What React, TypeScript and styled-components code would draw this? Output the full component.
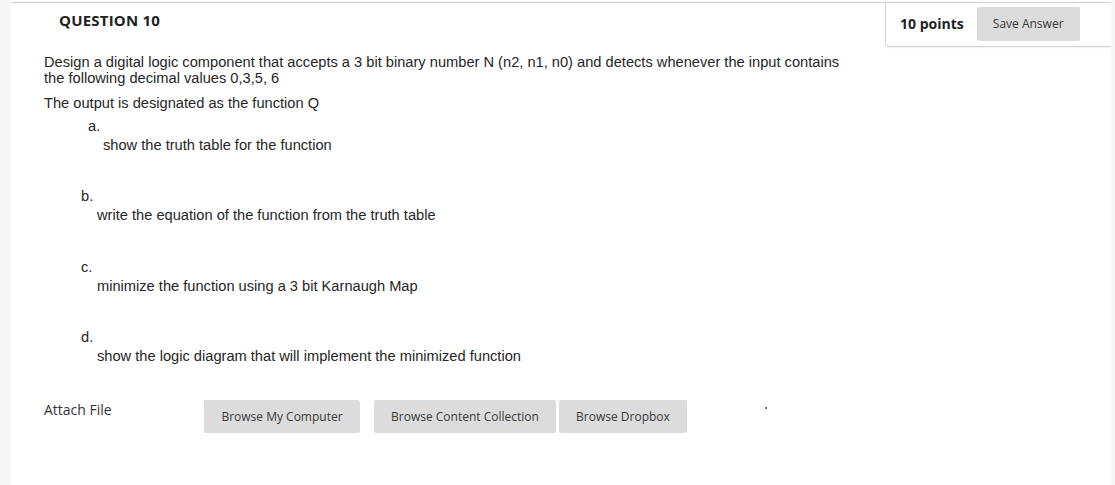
import React from "react";
import styled, { createGlobalStyle } from "styled-components";

const Global = createGlobalStyle`
  html, body { margin: 0; padding: 0; background: #ffffff; }
  body { width: 1115px; height: 485px; overflow: hidden; }
`;

const Page = styled.div`
  display: flex;
  width: 1115px;
  height: 485px;
`;

const SideStrip = styled.div<{ $w: number }>`
  width: ${(p) => p.$w}px;
  flex: none;
  background: #f6f6f6;
`;

const Main = styled.div`
  flex: 1;
  display: flex;
  flex-direction: column;
  margin-top: 2px;
  border-top: 1px solid #cfcfcf;
  background: #fff;
`;

const Header = styled.div`
  display: flex;
  align-items: flex-start;
  height: 44px;
`;

const Title = styled.h2`
  margin: 0;
  padding: 7px 0 0 48px;
  font-family: "Open Sans", sans-serif;
  font-weight: 700;
  font-size: 15px;
  line-height: 20px;
  color: #222;
  letter-spacing: 0.2px;
`;

const PointsBox = styled.div`
  margin-left: auto;
  width: 226px;
  height: 44px;
  box-sizing: border-box;
  border-left: 1px solid #d4d4d4;
  border-bottom: 1px solid #d4d4d4;
  border-bottom-left-radius: 4px;
  box-shadow: 0 1px 2px rgba(0, 0, 0, 0.06);
  display: flex;
  align-items: center;
  padding: 0 0 2px 14px;
  gap: 13px;
`;

const Points = styled.span`
  font-family: "Open Sans", sans-serif;
  font-weight: 700;
  font-size: 14px;
  color: #222;
`;

const GrayButton = styled.button<{ $w: number; $h: number }>`
  width: ${(p) => p.$w}px;
  height: ${(p) => p.$h}px;
  border: none;
  border-radius: 2px;
  background: #dcdcdc;
  font-family: "Open Sans", sans-serif;
  font-size: 12px;
  color: #3a3a3a;
  padding: 0;
  cursor: pointer;
`;

const Body = styled.div`
  padding: 7px 0 0 33px;
  font-family: "Liberation Sans", Arial, sans-serif;
  font-size: 14.65px;
  color: #262626;
`;

const Para = styled.p<{ $mt: number }>`
  margin: ${(p) => p.$mt}px 0 0;
  line-height: 16px;
  width: 805px;
`;

const List = styled.ol`
  list-style: none;
  margin: 0;
  padding: 0;
`;

const Item = styled.li<{ $mt: number; $indent: number; $textIndent: number }>`
  margin-top: ${(p) => p.$mt}px;
  padding-left: ${(p) => p.$indent}px;
  line-height: 16px;
  & > div:last-child {
    margin-top: 3px;
    padding-left: ${(p) => p.$textIndent}px;
  }
`;

const AttachRow = styled.div`
  display: flex;
  align-items: flex-start;
  padding: 36px 0 0 33px;
`;

const AttachLabel = styled.span`
  width: 160px;
  font-family: "Open Sans", sans-serif;
  font-size: 14px;
  line-height: 18px;
  color: #333;
  padding-top: 1px;
`;

const Buttons = styled.div`
  display: flex;
  gap: 3px;
  margin-top: 0;
`;

const Spacer = styled.div<{ $w: number }>`
  width: ${(p) => p.$w}px;
`;

const Dot = styled.span`
  margin: 7px 0 0 78px;
  width: 2px;
  height: 2px;
  background: #2233cc;
  border-radius: 1px;
`;

const items = [
  { label: "a.", text: "show the truth table for the function", mt: 7, indent: 44, ti: 15 },
  { label: "b.", text: "write the equation of the function from the truth table", mt: 35, indent: 37, ti: 16 },
  { label: "c.", text: "minimize the function using a 3 bit Karnaugh Map", mt: 36, indent: 37, ti: 16 },
  { label: "d.", text: "show the logic diagram that will implement the minimized function", mt: 35, indent: 37, ti: 16 },
];

export default function App() {
  return (
    <Page>
      <Global />
      <SideStrip $w={11} />
      <Main>
        <Header>
          <Title>QUESTION 10</Title>
          <PointsBox>
            <Points>10 points</Points>
            <GrayButton $w={103} $h={34}>Save Answer</GrayButton>
          </PointsBox>
        </Header>
        <Body>
          <Para $mt={0}>
            Design a digital logic component that accepts a 3 bit binary number N (n2, n1, n0) and detects whenever the input contains the following decimal values 0,3,5, 6
          </Para>
          <Para $mt={9}>The output is designated as the function Q</Para>
          <List>
            {items.map((it) => (
              <Item key={it.label} $mt={it.mt} $indent={it.indent} $textIndent={it.ti}>
                <div>{it.label}</div>
                <div>{it.text}</div>
              </Item>
            ))}
          </List>
        </Body>
        <AttachRow>
          <AttachLabel>Attach File</AttachLabel>
          <Buttons>
            <GrayButton $w={156} $h={33}>Browse My Computer</GrayButton>
            <Spacer $w={8} />
            <GrayButton $w={182} $h={33}>Browse Content Collection</GrayButton>
            <GrayButton $w={128} $h={33}>Browse Dropbox</GrayButton>
          </Buttons>
          <Dot />
        </AttachRow>
      </Main>
      <SideStrip $w={4} />
    </Page>
  );
}
